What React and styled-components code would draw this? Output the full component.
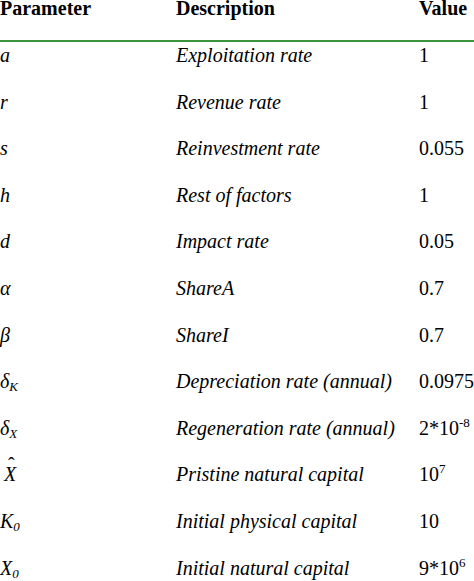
import React from 'react';
import styled, { createGlobalStyle } from 'styled-components';

const GlobalStyle = createGlobalStyle`
  html, body {
    margin: 0;
    padding: 0;
    background: #ffffff;
  }
  body {
    font-family: "Liberation Serif", "Times New Roman", serif;
    color: #000;
    overflow: hidden;
  }
`;

const Table = styled.div`
  width: 474px;
  margin-top: -2px;
`;

const HeaderRow = styled.div`
  display: grid;
  grid-template-columns: 176px 243px 1fr;
  height: 44px;
  border-bottom: 2px solid #3a963a;
  box-sizing: border-box;
  font-weight: bold;
  font-size: 20px;
  line-height: 20px;
`;

const Row = styled.div`
  display: grid;
  grid-template-columns: 176px 243px 1fr;
  height: 46.6px;
  padding-top: 3px;
  box-sizing: border-box;
  font-size: 20px;
  line-height: 20px;
  white-space: nowrap;
`;

const Cell = styled.div`
  font-style: ${(p) => (p.$italic ? 'italic' : 'normal')};
  padding-left: ${(p) => p.$indent || 0}px;
`;

const Sub = styled.sub`
  font-size: 13px;
  vertical-align: -3px;
  line-height: 0;
`;

const Sup = styled.sup`
  font-size: 13px;
  vertical-align: 8px;
  line-height: 0;
`;

const Hat = styled.span`
  position: relative;
  display: inline-block;
  &::before {
    content: 'ˆ';
    position: absolute;
    left: 4px;
    top: -9px;
    font-style: normal;
    font-size: 20px;
  }
`;

const rows = [
  { p: 'a', d: 'Exploitation rate', v: '1' },
  { p: 'r', d: 'Revenue rate', v: '1' },
  { p: 's', d: 'Reinvestment rate', v: '0.055' },
  { p: 'h', d: 'Rest of factors', v: '1' },
  { p: 'd', d: 'Impact rate', v: '0.05' },
  { p: 'α', d: 'ShareA', v: '0.7' },
  { p: 'β', d: 'ShareI', v: '0.7' },
  { p: <>δ<Sub>K</Sub></>, d: 'Depreciation rate (annual)', v: '0.0975' },
  { p: <>δ<Sub>X</Sub></>, d: 'Regeneration rate (annual)', v: <>2*10<Sup>-8</Sup></> },
  { p: <Hat>X</Hat>, indent: 4, d: 'Pristine natural capital', v: <>10<Sup>7</Sup></> },
  { p: <>K<Sub>0</Sub></>, d: 'Initial physical capital', v: '10' },
  { p: <>X<Sub>0</Sub></>, d: 'Initial natural capital', v: <>9*10<Sup>6</Sup></> },
];

export default function App() {
  return (
    <>
      <GlobalStyle />
      <Table>
        <HeaderRow>
          <Cell>Parameter</Cell>
          <Cell>Description</Cell>
          <Cell>Value</Cell>
        </HeaderRow>
        {rows.map((r, i) => (
          <Row key={i}>
            <Cell $italic $indent={r.indent}>{r.p}</Cell>
            <Cell $italic>{r.d}</Cell>
            <Cell>{r.v}</Cell>
          </Row>
        ))}
      </Table>
    </>
  );
}
